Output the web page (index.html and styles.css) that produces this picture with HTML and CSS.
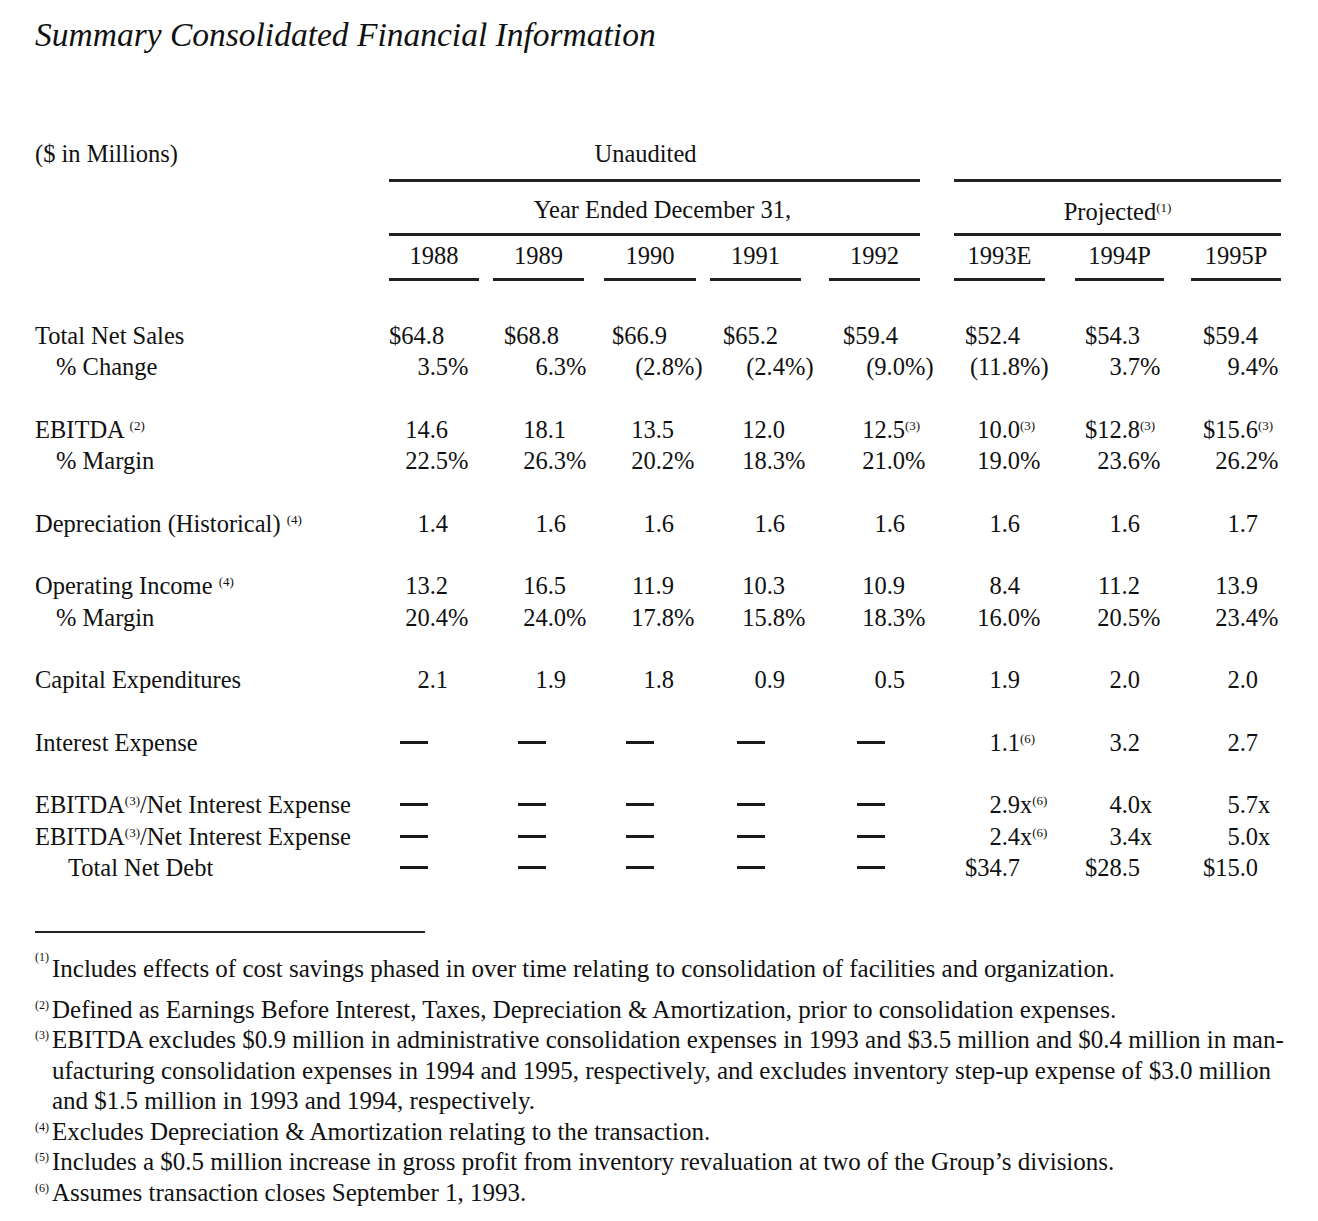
FILE: index.html
```html
<!DOCTYPE html>
<html>
<head>
	<meta charset="UTF-8">
	<title>Summary Consolidated Financial Information</title>
	<link rel="stylesheet" href="styles.css">
</head>
<body>
<div class="page">

	<h1 class="title">Summary Consolidated Financial Information</h1>

	<!-- column headings -->
	<div class="head">
		<div class="units">($ in Millions)</div>
		<div class="unaudited">Unaudited</div>
		<div class="proj_top"></div>

		<div class="year_ended">Year Ended December 31,</div>
		<div class="projected">Projected<sup>(1)</sup></div>

		<div class="yr c1">1988</div>
		<div class="yr c2">1989</div>
		<div class="yr c3">1990</div>
		<div class="yr c4">1991</div>
		<div class="yr c5">1992</div>
		<div class="yr c6">1993E</div>
		<div class="yr c7">1994P</div>
		<div class="yr c8">1995P</div>
	</div>

	<!-- figures -->
	<div class="rows">
		<div class="row">
			<div class="label">Total Net Sales</div>
			<div class="v nudge">$64.8</div>
			<div class="v nudge">$68.8</div>
			<div class="v nudge">$66.9</div>
			<div class="v nudge">$65.2</div>
			<div class="v nudge">$59.4</div>
			<div class="v">$52.4</div>
			<div class="v">$54.3</div>
			<div class="v">$59.4</div>
		</div>
		<div class="row">
			<div class="label sub">% Change</div>
			<div class="v">3.5<span class="hang">%</span></div>
			<div class="v">6.3<span class="hang">%</span></div>
			<div class="v">(2.8<span class="hang">%)</span></div>
			<div class="v">(2.4<span class="hang">%)</span></div>
			<div class="v">(9.0<span class="hang">%)</span></div>
			<div class="v">(11.8<span class="hang">%)</span></div>
			<div class="v">3.7<span class="hang">%</span></div>
			<div class="v">9.4<span class="hang">%</span></div>
		</div>

		<div class="row group">
			<div class="label">EBITDA <sup>(2)</sup></div>
			<div class="v">14.6</div>
			<div class="v">18.1</div>
			<div class="v">13.5</div>
			<div class="v">12.0</div>
			<div class="v">12.5<span class="hang"><sup>(3)</sup></span></div>
			<div class="v">10.0<span class="hang"><sup>(3)</sup></span></div>
			<div class="v">$12.8<span class="hang"><sup>(3)</sup></span></div>
			<div class="v">$15.6<span class="hang"><sup>(3)</sup></span></div>
		</div>
		<div class="row">
			<div class="label sub">% Margin</div>
			<div class="v">22.5<span class="hang">%</span></div>
			<div class="v">26.3<span class="hang">%</span></div>
			<div class="v">20.2<span class="hang">%</span></div>
			<div class="v">18.3<span class="hang">%</span></div>
			<div class="v">21.0<span class="hang">%</span></div>
			<div class="v">19.0<span class="hang">%</span></div>
			<div class="v">23.6<span class="hang">%</span></div>
			<div class="v">26.2<span class="hang">%</span></div>
		</div>

		<div class="row group">
			<div class="label">Depreciation (Historical) <sup>(4)</sup></div>
			<div class="v">1.4</div>
			<div class="v">1.6</div>
			<div class="v">1.6</div>
			<div class="v">1.6</div>
			<div class="v">1.6</div>
			<div class="v">1.6</div>
			<div class="v">1.6</div>
			<div class="v">1.7</div>
		</div>

		<div class="row group">
			<div class="label">Operating Income <sup>(4)</sup></div>
			<div class="v">13.2</div>
			<div class="v">16.5</div>
			<div class="v">11.9</div>
			<div class="v">10.3</div>
			<div class="v">10.9</div>
			<div class="v">8.4</div>
			<div class="v">11.2</div>
			<div class="v">13.9</div>
		</div>
		<div class="row">
			<div class="label sub">% Margin</div>
			<div class="v">20.4<span class="hang">%</span></div>
			<div class="v">24.0<span class="hang">%</span></div>
			<div class="v">17.8<span class="hang">%</span></div>
			<div class="v">15.8<span class="hang">%</span></div>
			<div class="v">18.3<span class="hang">%</span></div>
			<div class="v">16.0<span class="hang">%</span></div>
			<div class="v">20.5<span class="hang">%</span></div>
			<div class="v">23.4<span class="hang">%</span></div>
		</div>

		<div class="row group">
			<div class="label">Capital Expenditures</div>
			<div class="v">2.1</div>
			<div class="v">1.9</div>
			<div class="v">1.8</div>
			<div class="v">0.9</div>
			<div class="v">0.5</div>
			<div class="v">1.9</div>
			<div class="v">2.0</div>
			<div class="v">2.0</div>
		</div>

		<div class="row group">
			<div class="label">Interest Expense</div>
			<div class="v"><span class="dash"></span></div>
			<div class="v"><span class="dash"></span></div>
			<div class="v"><span class="dash"></span></div>
			<div class="v"><span class="dash"></span></div>
			<div class="v"><span class="dash"></span></div>
			<div class="v">1.1<span class="hang"><sup>(6)</sup></span></div>
			<div class="v">3.2</div>
			<div class="v">2.7</div>
		</div>

		<div class="row group">
			<div class="label">EBITDA<sup>(3)</sup>/Net Interest Expense</div>
			<div class="v"><span class="dash"></span></div>
			<div class="v"><span class="dash"></span></div>
			<div class="v"><span class="dash"></span></div>
			<div class="v"><span class="dash"></span></div>
			<div class="v"><span class="dash"></span></div>
			<div class="v">2.9<span class="hang">x<sup>(6)</sup></span></div>
			<div class="v">4.0<span class="hang">x</span></div>
			<div class="v">5.7<span class="hang">x</span></div>
		</div>
		<div class="row">
			<div class="label">EBITDA<sup>(3)</sup>/Net Interest Expense</div>
			<div class="v"><span class="dash"></span></div>
			<div class="v"><span class="dash"></span></div>
			<div class="v"><span class="dash"></span></div>
			<div class="v"><span class="dash"></span></div>
			<div class="v"><span class="dash"></span></div>
			<div class="v">2.4<span class="hang">x<sup>(6)</sup></span></div>
			<div class="v">3.4<span class="hang">x</span></div>
			<div class="v">5.0<span class="hang">x</span></div>
		</div>
		<div class="row">
			<div class="label debt">Total Net Debt</div>
			<div class="v"><span class="dash"></span></div>
			<div class="v"><span class="dash"></span></div>
			<div class="v"><span class="dash"></span></div>
			<div class="v"><span class="dash"></span></div>
			<div class="v"><span class="dash"></span></div>
			<div class="v">$34.7</div>
			<div class="v">$28.5</div>
			<div class="v">$15.0</div>
		</div>
	</div>

	<!-- footnotes -->
	<div class="notes">
		<div class="fn first">
			<span class="mark">(1)</span>
			<p>Includes effects of cost savings phased in over time relating to consolidation of facilities and organization.</p>
		</div>
		<div class="fn second">
			<span class="mark">(2)</span>
			<p>Defined as Earnings Before Interest, Taxes, Depreciation &amp; Amortization, prior to consolidation expenses.</p>
		</div>
		<div class="fn">
			<span class="mark">(3)</span>
			<p>EBITDA excludes $0.9 million in administrative consolidation expenses in 1993 and $3.5 million and $0.4 million in man-<br>ufacturing consolidation expenses in 1994 and 1995, respectively, and excludes inventory step-up expense of $3.0 million<br>and $1.5 million in 1993 and 1994, respectively.</p>
		</div>
		<div class="fn">
			<span class="mark">(4)</span>
			<p>Excludes Depreciation &amp; Amortization relating to the transaction.</p>
		</div>
		<div class="fn">
			<span class="mark">(5)</span>
			<p>Includes a $0.5 million increase in gross profit from inventory revaluation at two of the Group’s divisions.</p>
		</div>
		<div class="fn">
			<span class="mark">(6)</span>
			<p>Assumes transaction closes September 1, 1993.</p>
		</div>
	</div>

</div>
</body>
</html>
```

FILE: styles.css
```css
html, body{
	margin: 0;
	padding: 0;
	background: #ffffff;
}
body{
	font-family: "Liberation Serif", "Times New Roman", serif;
	font-size: 24.5px;
	color: #111111;
}
.page{
	width: 1318px;
	padding-left: 35px;
	box-sizing: border-box;
}

.title{
	margin: 0;
	padding-top: 15px;
	font-size: 33.5px;
	line-height: 40px;
	font-style: italic;
	font-weight: normal;
}

sup{
	font-size: 13px;
	line-height: 0;
	vertical-align: 8px;
}

/* heading grid: label | c1 gap c2 gap c3 gap c4 gap c5 gap c6 gap c7 gap c8 */
.head{
	margin-top: 83px;
	display: grid;
	grid-template-columns: 354px 90px 14px 91px 20px 92px 14px 91px 28px 91px 34px 91px 30px 89px 27px 90px;
	line-height: 31px;
}
.units{
	grid-column: 1 / 2;
	grid-row: 1;
	align-self: start;
}
.unaudited, .proj_top{
	grid-row: 1;
	padding-bottom: 8px;
	border-bottom: 3px solid #222;
	text-align: center;
}
.unaudited{
	grid-column: 2 / 11;
	padding-right: 18px;
}
.proj_top{
	grid-column: 12 / 17;
	height: 31px;
	margin-top: 2px;
}
.year_ended, .projected{
	grid-row: 2;
	padding-top: 12px;
	padding-bottom: 7px;
	border-bottom: 3px solid #222;
	text-align: center;
}
.year_ended{
	grid-column: 2 / 11;
	padding-left: 16px;
}
.projected{
	grid-column: 12 / 17;
	padding-top: 14px;
	padding-bottom: 6px;
}
.yr{
	grid-row: 3;
	padding-top: 4px;
	padding-bottom: 7px;
	border-bottom: 3px solid #222;
	text-align: center;
}
.c1{ grid-column: 2 / 3; }
.c2{ grid-column: 4 / 5; }
.c3{ grid-column: 6 / 7; }
.c4{ grid-column: 8 / 9; }
.c5{ grid-column: 10 / 11; }
.c6{ grid-column: 12 / 13; }
.c7{ grid-column: 14 / 15; }
.c8{ grid-column: 16 / 17; }

/* figure rows, each value column ends where the digits end */
.rows{
	margin-top: 39px;
}
.row{
	display: grid;
	grid-template-columns: 354px 59px 118px 108px 111px 120px 115px 120px 118px;
	height: 31.3px;
	line-height: 31.3px;
	white-space: nowrap;
}
.row.group{
	margin-top: 31.3px;
}
.label.sub{
	padding-left: 21px;
}
.label.debt{
	padding-left: 33px;
}
.v{
	text-align: right;
}
.v.nudge{
	padding-right: 7px;
}
.hang{
	display: inline-block;
	width: 0;
	text-align: left;
	white-space: nowrap;
}
.dash{
	display: inline-block;
	width: 28px;
	height: 3px;
	background: #1a1a1a;
	margin-right: 20px;
	vertical-align: 7px;
}

/* footnotes */
.notes{
	margin-top: 48px;
	border-top: 2px solid #222;
	width: 390px;
	padding-top: 21px;
	white-space: nowrap;
	font-size: 25px;
}
.fn{
	display: flex;
	line-height: 30.5px;
}
.fn p{
	margin: 0;
}
.fn .mark{
	width: 17px;
	flex: none;
	font-size: 12px;
	line-height: 20px;
}
.fn.first .mark{
	line-height: 6px;
}
.fn.second{
	margin-top: 10px;
}
```
